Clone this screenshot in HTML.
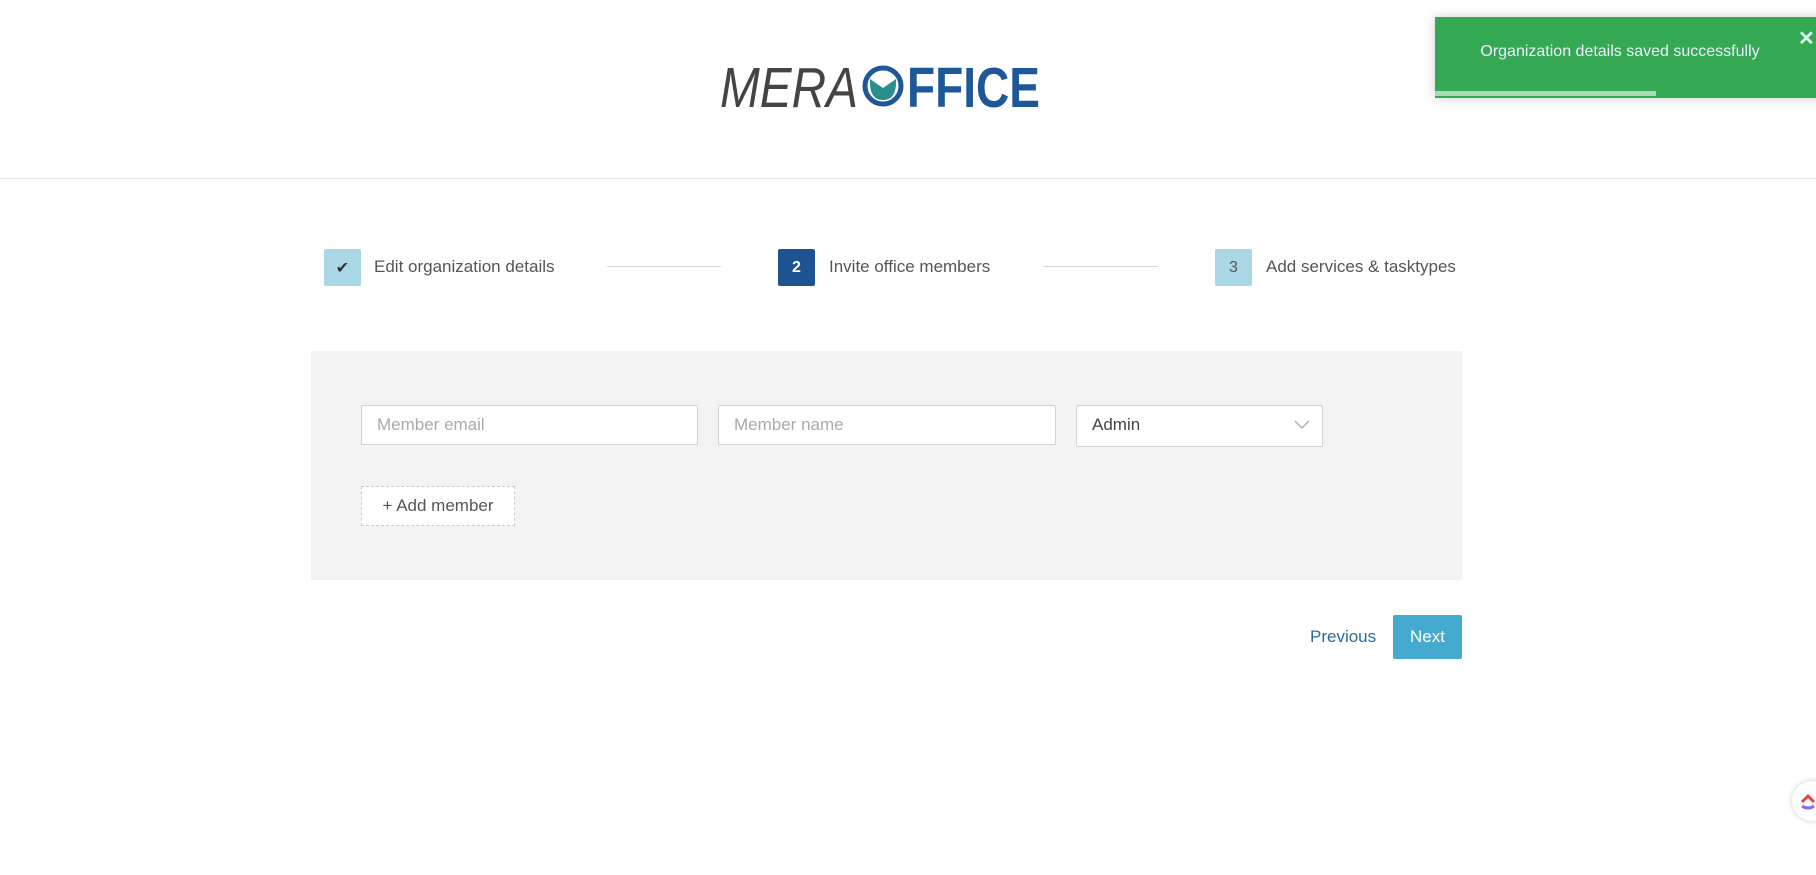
<!DOCTYPE html>
<html><head><meta charset="utf-8"><style>
body{margin:0;width:1816px;height:875px;background:#fff;font-family:"Liberation Sans",sans-serif;position:relative;overflow:hidden}
.a{position:absolute}
.box{position:absolute;top:249px;width:37px;height:37px;border-radius:2px;display:flex;align-items:center;justify-content:center;font-size:16px}
.st{position:absolute;top:257px;font-size:17px;color:#555}
.ln{position:absolute;top:266px;height:1px;background:#d8d8d8}
.inp{position:absolute;top:405px;height:38px;border:1px solid #cfd4da;background:#fff;border-radius:2px;font-size:17px;color:#aaa;line-height:38px;padding-left:15px;box-sizing:content-box}
</style></head><body>
<svg class="a" style="left:715px;top:55px" width="340" height="65" viewBox="0 0 340 65">
<text x="5" y="52" font-family="Liberation Sans" font-style="italic" font-size="57" fill="#444" textLength="138" lengthAdjust="spacingAndGlyphs">MERA</text>
<circle cx="168" cy="31" r="18" fill="none" stroke="#1f5899" stroke-width="5"/>
<path d="M155 24 L168 33 L181 24 Q182 45 168 45 Q154 45 155 24Z" fill="#2a8f8a"/>
<text x="192" y="52" font-family="Liberation Sans" font-weight="bold" font-size="57" fill="#1f5899" textLength="133" lengthAdjust="spacingAndGlyphs">FFICE</text>
</svg>
<div class="a" style="left:0;top:178px;width:1816px;height:1px;background:#e6e6e6"></div>

<div class="box" style="left:324px;background:#a9d7e6;color:#333">✔</div>
<div class="st" style="left:374px">Edit organization details</div>
<div class="ln" style="left:607px;width:114px"></div>
<div class="box" style="left:778px;background:#1d5391;color:#fff;font-weight:bold">2</div>
<div class="st" style="left:829px">Invite office members</div>
<div class="ln" style="left:1043px;width:115px"></div>
<div class="box" style="left:1215px;background:#a9d7e6;color:#555">3</div>
<div class="st" style="left:1266px">Add services &amp; tasktypes</div>

<div class="a" style="left:311px;top:351px;width:1151px;height:229px;background:#f3f3f3"></div>
<div class="inp" style="left:361px;width:320px">Member email</div>
<div class="inp" style="left:718px;width:321px">Member name</div>
<div class="inp" style="left:1076px;width:230px;height:40px;color:#444">Admin
<svg class="a" style="right:12px;top:14px" width="16" height="10"><path d="M1 1 L8 8 L15 1" fill="none" stroke="#aaa" stroke-width="1.3"/></svg></div>
<div class="a" style="left:361px;top:486px;width:152px;height:38px;border:1px dashed #ccc;background:#fff;font-size:17px;color:#555;line-height:38px;text-align:center">+ Add member</div>

<div class="a" style="left:1310px;top:627px;font-size:17px;color:#2c6aa0">Previous</div>
<div class="a" style="left:1393px;top:615px;width:69px;height:44px;background:#45aad0;color:#fff;font-size:17px;line-height:44px;text-align:center;border-radius:2px">Next</div>

<div class="a" style="left:1435px;top:17px;width:390px;height:81px;background:#35a853;box-shadow:0 0 10px rgba(0,0,0,.2)"></div>
<div class="a" style="left:1435px;top:43px;width:370px;text-align:center;color:#eef;font-size:16px">Organization details saved successfully</div>
<div class="a" style="left:1435px;top:91px;width:221px;height:5px;background:#a8dcb5"></div>
<div class="a" style="left:1798px;top:26px;color:#dfe;font-size:20px;font-weight:bold">✕</div>
<div class="a" style="left:1792px;top:781px;width:40px;height:40px;border-radius:50%;background:#fff;box-shadow:0 0 6px rgba(0,0,0,.2)"></div>
<svg class="a" style="left:1800px;top:790px" width="16" height="20"><path d="M2 12 L8 6 L14 12" fill="none" stroke="#e44" stroke-width="3"/><path d="M2 16 Q8 20 14 16" fill="none" stroke="#86f" stroke-width="3"/></svg>
</body></html>
